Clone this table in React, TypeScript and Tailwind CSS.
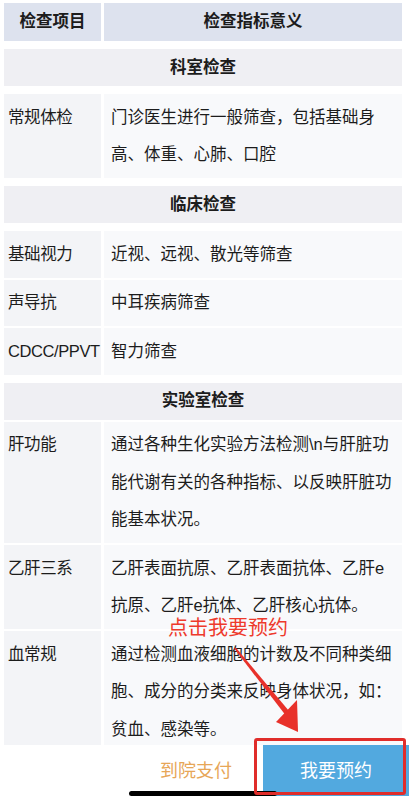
import React from 'react';

const font = "font-['Liberation_Sans','Noto_Sans_CJK_SC',sans-serif]";

type Item = { name: string; desc: string };

const groups: { title: string; items: Item[]; tight?: boolean }[] = [
  {
    title: '科室检查',
    items: [{ name: '常规体检', desc: '门诊医生进行一般筛查，包括基础身高、体重、心肺、口腔' }],
  },
  {
    title: '临床检查',
    items: [
      { name: '基础视力', desc: '近视、远视、散光等筛查' },
      { name: '声导抗', desc: '中耳疾病筛查' },
      { name: 'CDCC/PPVT', desc: '智力筛查' },
    ],
  },
  {
    title: '实验室检查',
    tight: true,
    items: [
      { name: '肝功能', desc: '通过各种生化实验方法检测\\n与肝脏功能代谢有关的各种指标、以反映肝脏功能基本状况。' },
      { name: '乙肝三系', desc: '乙肝表面抗原、乙肝表面抗体、乙肝e抗原、乙肝e抗体、乙肝核心抗体。' },
      { name: '血常规', desc: '通过检测血液细胞的计数及不同种类细胞、成分的分类来反映身体状况，如：贫血、感染等。' },
    ],
  },
];

function Row({ item }: { item: Item }) {
  return (
    <div className="flex gap-[3px]">
      <div className="w-[97px] shrink-0 whitespace-nowrap bg-[#f3f4f7] pl-[4px] py-[4.5px] tracking-[-0.4px]">
        {item.name}
      </div>
      <div className="flex-1 bg-[#f8f9fb] pl-[7px] pr-[9px] py-[4.5px]">{item.desc}</div>
    </div>
  );
}

export default function App() {
  return (
    <div className={`relative h-[796px] overflow-hidden bg-white text-[16.5px] leading-[37.5px] text-[#1c1c1c] ${font}`}>
      <div className="pt-[3px] pl-[4px] pr-[7px]">
        {/* table header */}
        <div className="flex h-[38px] gap-[3px] font-bold">
          <div className="flex w-[97px] shrink-0 items-center justify-center bg-[#dde2ee]">检查项目</div>
          <div className="flex flex-1 items-center justify-center bg-[#dde2ee]">检查指标意义</div>
        </div>

        {groups.map((g) => (
          <div key={g.title}>
            <div className="mt-[8px] flex h-[37px] items-center justify-center bg-[#efeff3] font-bold">
              {g.title}
            </div>
            <div className={`${g.tight ? 'mt-[2px]' : 'mt-[8px]'} flex flex-col gap-[2px]`}>
              {g.items.map((it) => (
                <Row key={it.name} item={it} />
              ))}
            </div>
          </div>
        ))}
      </div>

      {/* bottom bar */}
      <div className="absolute inset-x-0 bottom-0 flex h-[51px] bg-white text-[18px] leading-none">
        <div className="flex flex-1 items-center justify-end pr-[31px] text-[#e7a657]">到院支付</div>
        <div className="flex w-[146px] items-center justify-center bg-[#52a9df] text-white">我要预约</div>
      </div>

      {/* home indicator */}
      <div className="absolute bottom-[0px] left-[129px] h-[5px] w-[148px] rounded-full bg-black" />

      {/* red annotation */}
      <div className="absolute left-[168px] top-[616px] text-[20px] leading-[24px] text-[#ee3a2c]">点击我要预约</div>
      <svg className="absolute left-[228px] top-[640px]" width="75" height="95" viewBox="0 0 75 95">
        <polygon points="6.2,8.6 7.8,7.4 61,71 57,74.5" fill="#e8312a" />
        <polygon points="70,92 48,82 69,60" fill="#e8312a" />
      </svg>
      <div className="absolute left-[254px] top-[738px] h-[57px] w-[152px] rounded-[3px] border-[3px] border-[#e02d2a]" />
    </div>
  );
}
